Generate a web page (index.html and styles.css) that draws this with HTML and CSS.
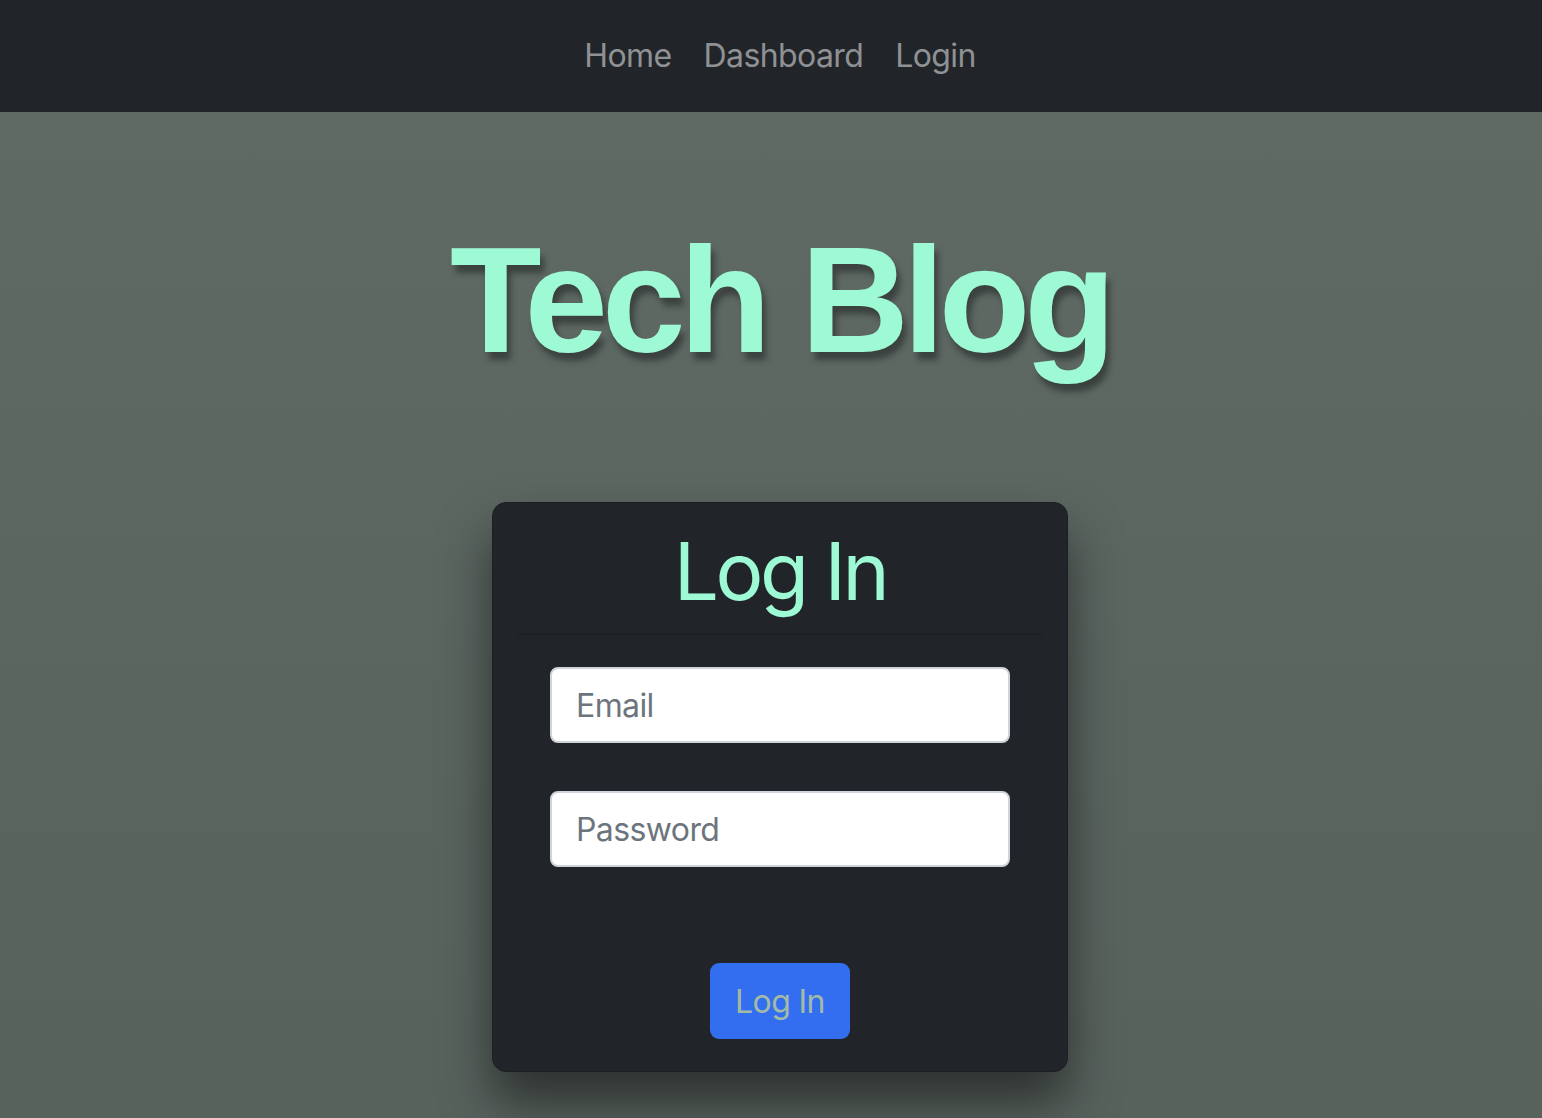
FILE: index.html
```html
<!DOCTYPE html>
<html lang="en">
<head>
<meta charset="utf-8">
<title>Tech Blog</title>
<link rel="stylesheet" href="styles.css">
</head>
<body>
<nav class="navbar">
  <div class="nav-inner">
    <a class="nav-link" href="#">Home</a>
    <a class="nav-link" href="#">Dashboard</a>
    <a class="nav-link" href="#">Login</a>
  </div>
</nav>
<main class="main">
  <h1 class="site-title">Tech Blog</h1>
  <section class="card">
    <h2 class="card-header">Log In</h2>
    <form class="card-body">
      <input class="form-control" type="email" placeholder="Email">
      <input class="form-control" type="password" placeholder="Password">
      <button class="btn" type="button">Log In</button>
    </form>
  </section>
</main>
</body>
</html>
```
FILE: styles.css
```css
html, body {
  margin: 0;
  padding: 0;
}
body {
  font-family: Inter, "Noto Sans", sans-serif;
  background: linear-gradient(180deg, #606b66 0%, #5b6560 60%, #58625d 100%);
  min-height: 1118px;
}
.navbar {
  background: #212529;
  height: 112px;
  display: flex;
  align-items: center;
}
.nav-inner {
  flex: 1;
  display: flex;
  justify-content: center;
  padding-left: 18px;
}
.nav-link {
  color: #8f9194;
  text-decoration: none;
  font-size: 32px;
  line-height: 48px;
  letter-spacing: -0.6px;
  padding: 0 16px;
}
.main {
  display: flex;
  flex-direction: column;
  align-items: center;
  padding-left: 18px;
}
.site-title {
  margin: 98px 0 0;
  font-family: "Liberation Sans", Arial, sans-serif;
  font-weight: 700;
  font-size: 150px;
  line-height: 180px;
  letter-spacing: -6px;
  color: #9efad5;
  text-shadow: 4px 8px 6px rgba(0, 0, 0, 0.38);
}
.card {
  margin-top: 112px;
  width: 576px;
  box-sizing: border-box;
  background: #212529;
  border: 1px solid #1c1f22;
  border-radius: 14px;
  box-shadow: 0 30px 50px rgba(0, 0, 0, 0.5);
  padding: 0 0 32px;
}
.card-header {
  margin: 0 25px;
  padding: 20px 0 14px;
  text-align: center;
  font-size: 80px;
  line-height: 96px;
  font-weight: 400;
  letter-spacing: -3.5px;
  color: #9efad5;
  border-bottom: 2px solid #1c1f23;
}
.card-body {
  display: flex;
  flex-direction: column;
  align-items: center;
  padding-top: 32px;
  margin: 0;
}
.form-control {
  width: 460px;
  height: 76px;
  box-sizing: border-box;
  border: 2px solid #ced4da;
  border-radius: 8px;
  background: #fff;
  padding: 12px 24px;
  font-family: Inter, "Noto Sans", sans-serif;
  font-size: 32px;
  letter-spacing: -0.6px;
  color: #212529;
  margin: 0 0 48px;
}
.form-control::placeholder {
  color: #6c757d;
}
.form-control + .form-control {
  margin-bottom: 96px;
}
.btn {
  width: 140px;
  height: 76px;
  border: none;
  border-radius: 9px;
  background: #346ef0;
  color: #a2bba6;
  font-family: Inter, "Noto Sans", sans-serif;
  font-size: 32px;
  letter-spacing: -0.6px;
  padding: 0;
}
```
